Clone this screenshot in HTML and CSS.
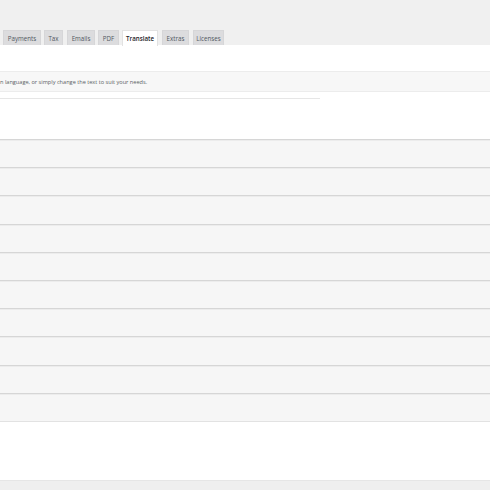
FILE: index.html
```html
<!DOCTYPE html>
<html>
<head>
<meta charset="utf-8">
<link rel="stylesheet" href="styles.css">
</head>
<body>
<div class="top">
  <nav class="tabs">
    <span class="tab w-pay">Payments</span>
    <span class="tab w-tax">Tax</span>
    <span class="tab w-em">Emails</span>
    <span class="tab w-pdf">PDF</span>
    <span class="tab active w-tr">Translate</span>
    <span class="tab w-ex">Extras</span>
    <span class="tab w-lic">Licenses</span>
  </nav>
</div>
<main class="panel">
  <div class="desc">n language, or simply change the text to suit your needs.</div>
  <div class="field-line"></div>
  <div class="rows">
    <div class="row"></div>
    <div class="row"></div>
    <div class="row"></div>
    <div class="row"></div>
    <div class="row"></div>
    <div class="row"></div>
    <div class="row"></div>
    <div class="row"></div>
    <div class="row"></div>
    <div class="row"></div>
  </div>
</main>
<footer class="bottom"></footer>
</body>
</html>
```
FILE: styles.css
```css
html, body {
  margin: 0;
  padding: 0;
  background: #f0f0f0;
  font-family: "Open Sans", "Noto Sans", sans-serif;
  overflow: hidden;
}
.top {
  height: 45px;
  display: flex;
  align-items: flex-end;
}
.tabs {
  display: flex;
  gap: 3px;
  padding-left: 3px;
  height: 15px;
}
.tab {
  box-sizing: border-box;
  height: 15px;
  display: flex;
  align-items: center;
  justify-content: center;
  background: #dcdcde;
  border: 1px solid #d6d6d8;
  border-bottom: none;
  color: #50575e;
  font-size: 6.2px;
  font-weight: 400;
}
.tab.active {
  background: #fff;
  border-color: #e2e2e2;
  color: #1d2327;
  font-weight: 600;
  height: 16px;
  margin-bottom: -1px;
  position: relative;
}
.w-pay { width: 38px; }
.w-tax { width: 19px; }
.w-em { width: 28px; margin-left: 1px; }
.w-pdf { width: 21px; }
.w-tr { width: 36px; }
.w-ex { width: 27px; margin-left: 1px; }
.w-lic { width: 31px; margin-left: 1px; }
.panel {
  background: #fff;
  height: 435px;
  box-sizing: border-box;
  padding-top: 26px;
}
.desc {
  box-sizing: border-box;
  height: 21px;
  background: #f7f7f7;
  border-top: 1px solid #ececec;
  border-bottom: 1px solid #ececec;
  display: flex;
  align-items: center;
  font-size: 5.6px;
  color: #5a5f64;
}
.field-line {
  margin-top: 6px;
  width: 320px;
  height: 1px;
  background: #e6e6e6;
}
.rows {
  margin-top: 40px;
}
.row {
  box-sizing: border-box;
  height: 28.2px;
  background: #f6f6f6;
  border-top: 1px solid #d6d6d6;
  box-shadow: inset 0 1px 0 #ececec;
}
.row:last-child {
  border-bottom: 1px solid #e2e2e2;
  height: 29.2px;
}
.bottom {
  height: 10px;
  background: #efefef;
  border-top: 1px solid #e6e6e6;
}
```
